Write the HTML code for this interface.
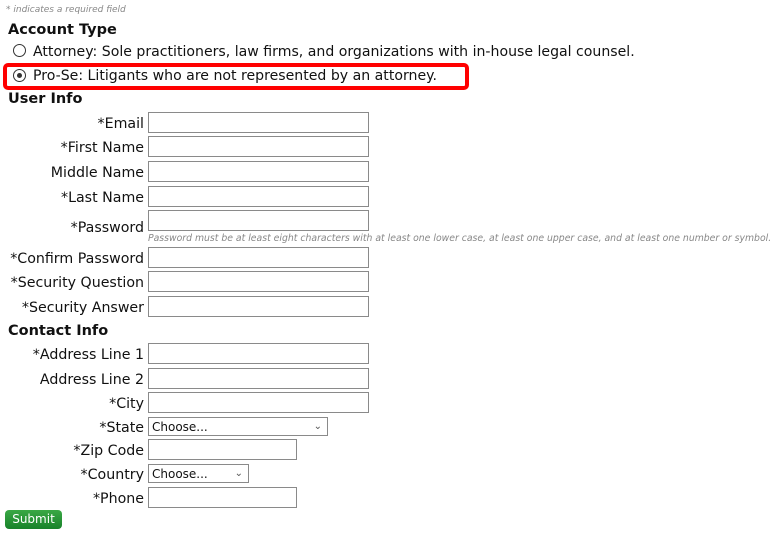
<!DOCTYPE html>
<html><head><style>
body{margin:0;width:779px;height:538px;background:#fff;font-family:"DejaVu Sans",Verdana,sans-serif;color:#111;position:relative;overflow:hidden}
.a{position:absolute;white-space:nowrap}
.l{position:absolute;right:635px;font-size:14.2px;white-space:nowrap;line-height:16px;margin-top:1px}
.i{position:absolute;left:148px;width:219px;height:19px;border:1px solid #8a8a8a;background:#fff}
.h{font-weight:bold;font-size:14.5px;margin-top:1px}
.s{position:absolute;left:148px;height:19px;border:1px solid #8a8a8a;background:#fff;font-size:12px;line-height:18px;padding-left:3px;box-sizing:border-box}
.s span{position:absolute;right:5px;top:0;font-size:10px;color:#555}
.r{position:absolute;width:11px;height:11px;border:1px solid #333;border-radius:50%;background:#fff}
</style></head><body>
<div class="a" style="left:6px;top:5px;font-size:9px;font-style:italic;color:#888">* indicates a required field</div>
<div class="a h" style="left:8px;top:21px">Account Type</div>
<div class="r" style="left:13px;top:44px"></div>
<div class="a" style="left:33px;top:44px;font-size:14.1px">Attorney: Sole practitioners, law firms, and organizations with in-house legal counsel.</div>
<div class="a" style="left:3px;top:63px;width:458px;height:19px;border:4px solid #f00;border-radius:5px"></div>
<div class="r" style="left:13px;top:69px"><div style="position:absolute;left:3px;top:3px;width:5px;height:5px;border-radius:50%;background:#333"></div></div>
<div class="a" style="left:33px;top:68px;font-size:14.1px">Pro-Se: Litigants who are not represented by an attorney.</div>
<div class="a h" style="left:8px;top:90px">User Info</div>

<div class="l" style="top:115px">*Email</div><div class="i" style="top:112px"></div>
<div class="l" style="top:139px">*First Name</div><div class="i" style="top:136px"></div>
<div class="l" style="top:164px">Middle Name</div><div class="i" style="top:161px"></div>
<div class="l" style="top:189px">*Last Name</div><div class="i" style="top:186px"></div>
<div class="l" style="top:219px">*Password</div><div class="i" style="top:210px"></div>
<div class="a" style="left:148px;top:233px;font-size:9.3px;font-style:italic;color:#888">Password must be at least eight characters with at least one lower case, at least one upper case, and at least one number or symbol.</div>
<div class="l" style="top:250px">*Confirm Password</div><div class="i" style="top:247px"></div>
<div class="l" style="top:274px">*Security Question</div><div class="i" style="top:271px"></div>
<div class="l" style="top:299px">*Security Answer</div><div class="i" style="top:296px"></div>
<div class="a h" style="left:8px;top:322px">Contact Info</div>
<div class="l" style="top:346px">*Address Line 1</div><div class="i" style="top:343px"></div>
<div class="l" style="top:371px">Address Line 2</div><div class="i" style="top:368px"></div>
<div class="l" style="top:395px">*City</div><div class="i" style="top:392px"></div>
<div class="l" style="top:419px">*State</div><div class="s" style="top:417px;width:180px">Choose...<span>&#8964;</span></div>
<div class="l" style="top:442px">*Zip Code</div><div class="i" style="top:439px;width:147px"></div>
<div class="l" style="top:466px">*Country</div><div class="s" style="top:464px;width:101px">Choose...<span>&#8964;</span></div>
<div class="l" style="top:490px">*Phone</div><div class="i" style="top:487px;width:147px"></div>
<div class="a" style="left:5px;top:510px;width:57px;height:19px;border-radius:4px;background:linear-gradient(#3aa845,#18822a);color:#fff;font-size:12px;line-height:19px;text-align:center;border:0">Submit</div>
</body></html>
